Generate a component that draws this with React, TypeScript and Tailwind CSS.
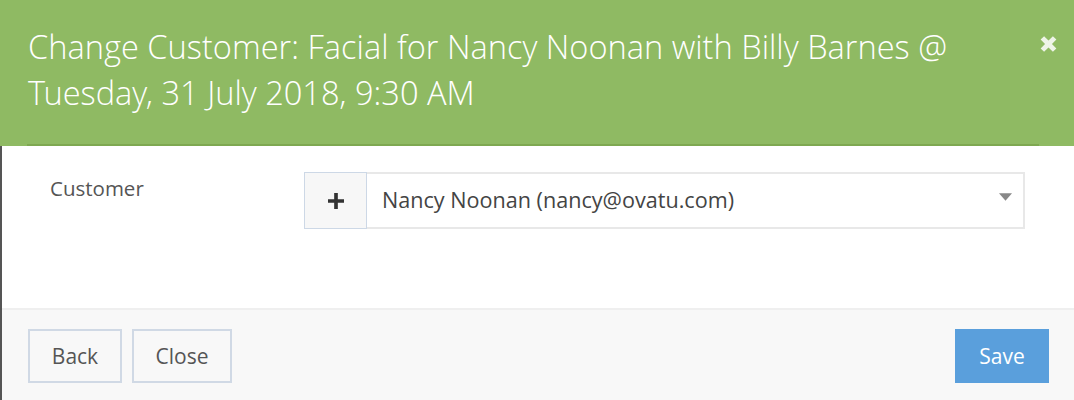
import React from "react";

const App: React.FC = () => {
  return (
    <div
      className="w-[1074px] h-[400px] overflow-hidden bg-white flex flex-col"
      style={{ fontFamily: '"Open Sans", sans-serif' }}
    >
      {/* header */}
      <div className="bg-[#8fba63] h-[146px] relative flex flex-col">
        <div className="flex flex-1 pl-[28px] pr-[16px] pt-[24px]">
          <h1
            className="flex-1 text-white font-light text-[32.6px] leading-[46px]"
            style={{ fontFamily: '"Open Sans Light", "Open Sans", sans-serif' }}
          >
            Change Customer: Facial for Nancy Noonan with Billy Barnes @
            <br />
            Tuesday, 31 July 2018, 9:30 AM
          </h1>
          <button className="w-[18px] h-[18px] mt-[11px] text-[#eef4e8]">
            <svg viewBox="2.6 2.6 10.8 10.8" className="w-[17px] h-[18px]">
              <path
                d="M3 5.2 5.2 3 8 5.8 10.8 3 13 5.2 10.2 8 13 10.8 10.8 13 8 10.2 5.2 13 3 10.8 5.8 8Z"
                fill="currentColor"
              />
            </svg>
          </button>
        </div>
        <div className="ml-[27px] mr-[35px] h-[2px] bg-[#7ea851]" />
      </div>

      {/* body */}
      <div className="flex-1 flex flex-col border-l-2 border-[#555]">
        <div className="flex items-start h-[162px] pt-[26px]">
          <label className="w-[302px] pl-[48px] pt-[1px] text-[20.5px] text-[#555]">
            Customer
          </label>
          <div className="flex h-[57px] w-[721px]">
            <div className="w-[63px] flex items-center justify-center bg-[#f7f7f7] border border-[#cdd8e6] text-[#333]">
              <svg viewBox="0 0 14 14" className="w-[16px] h-[16px]">
                <path d="M5.4 0h3.2v5.4H14v3.2H8.6V14H5.4V8.6H0V5.4h5.4Z" fill="currentColor" />
              </svg>
            </div>
            <div className="flex-1 flex items-center justify-between border-2 border-l-0 border-[#e8e8e8] pl-[15px] pr-[11px]">
              <span className="text-[21.6px] text-[#444]">Nancy Noonan (nancy@ovatu.com)</span>
              <svg viewBox="0 0 12 7" className="w-[13px] h-[8px] mt-[-8px]">
                <path d="M0 0h12L6 7Z" fill="#888" />
              </svg>
            </div>
          </div>
        </div>

        {/* footer */}
        <div className="flex-1 bg-[#f8f8f8] border-t-2 border-[#efefef] flex items-start justify-between pl-[26px] pr-[25px] pt-[19px]">
          <div className="flex gap-[10px]">
            <button className="h-[54px] w-[94px] pt-[2px] border-2 border-[#d0d9e5] text-[21px] text-[#555] bg-[#f8f8f8]">
              Back
            </button>
            <button className="h-[54px] w-[100px] pt-[2px] border-2 border-[#d0d9e5] text-[21px] text-[#555] bg-[#f8f8f8]">
              Close
            </button>
          </div>
          <button className="h-[54px] w-[94px] pt-[2px] bg-[#5a9fdc] text-white text-[21px]">
            Save
          </button>
        </div>
      </div>
    </div>
  );
};

export default App;
